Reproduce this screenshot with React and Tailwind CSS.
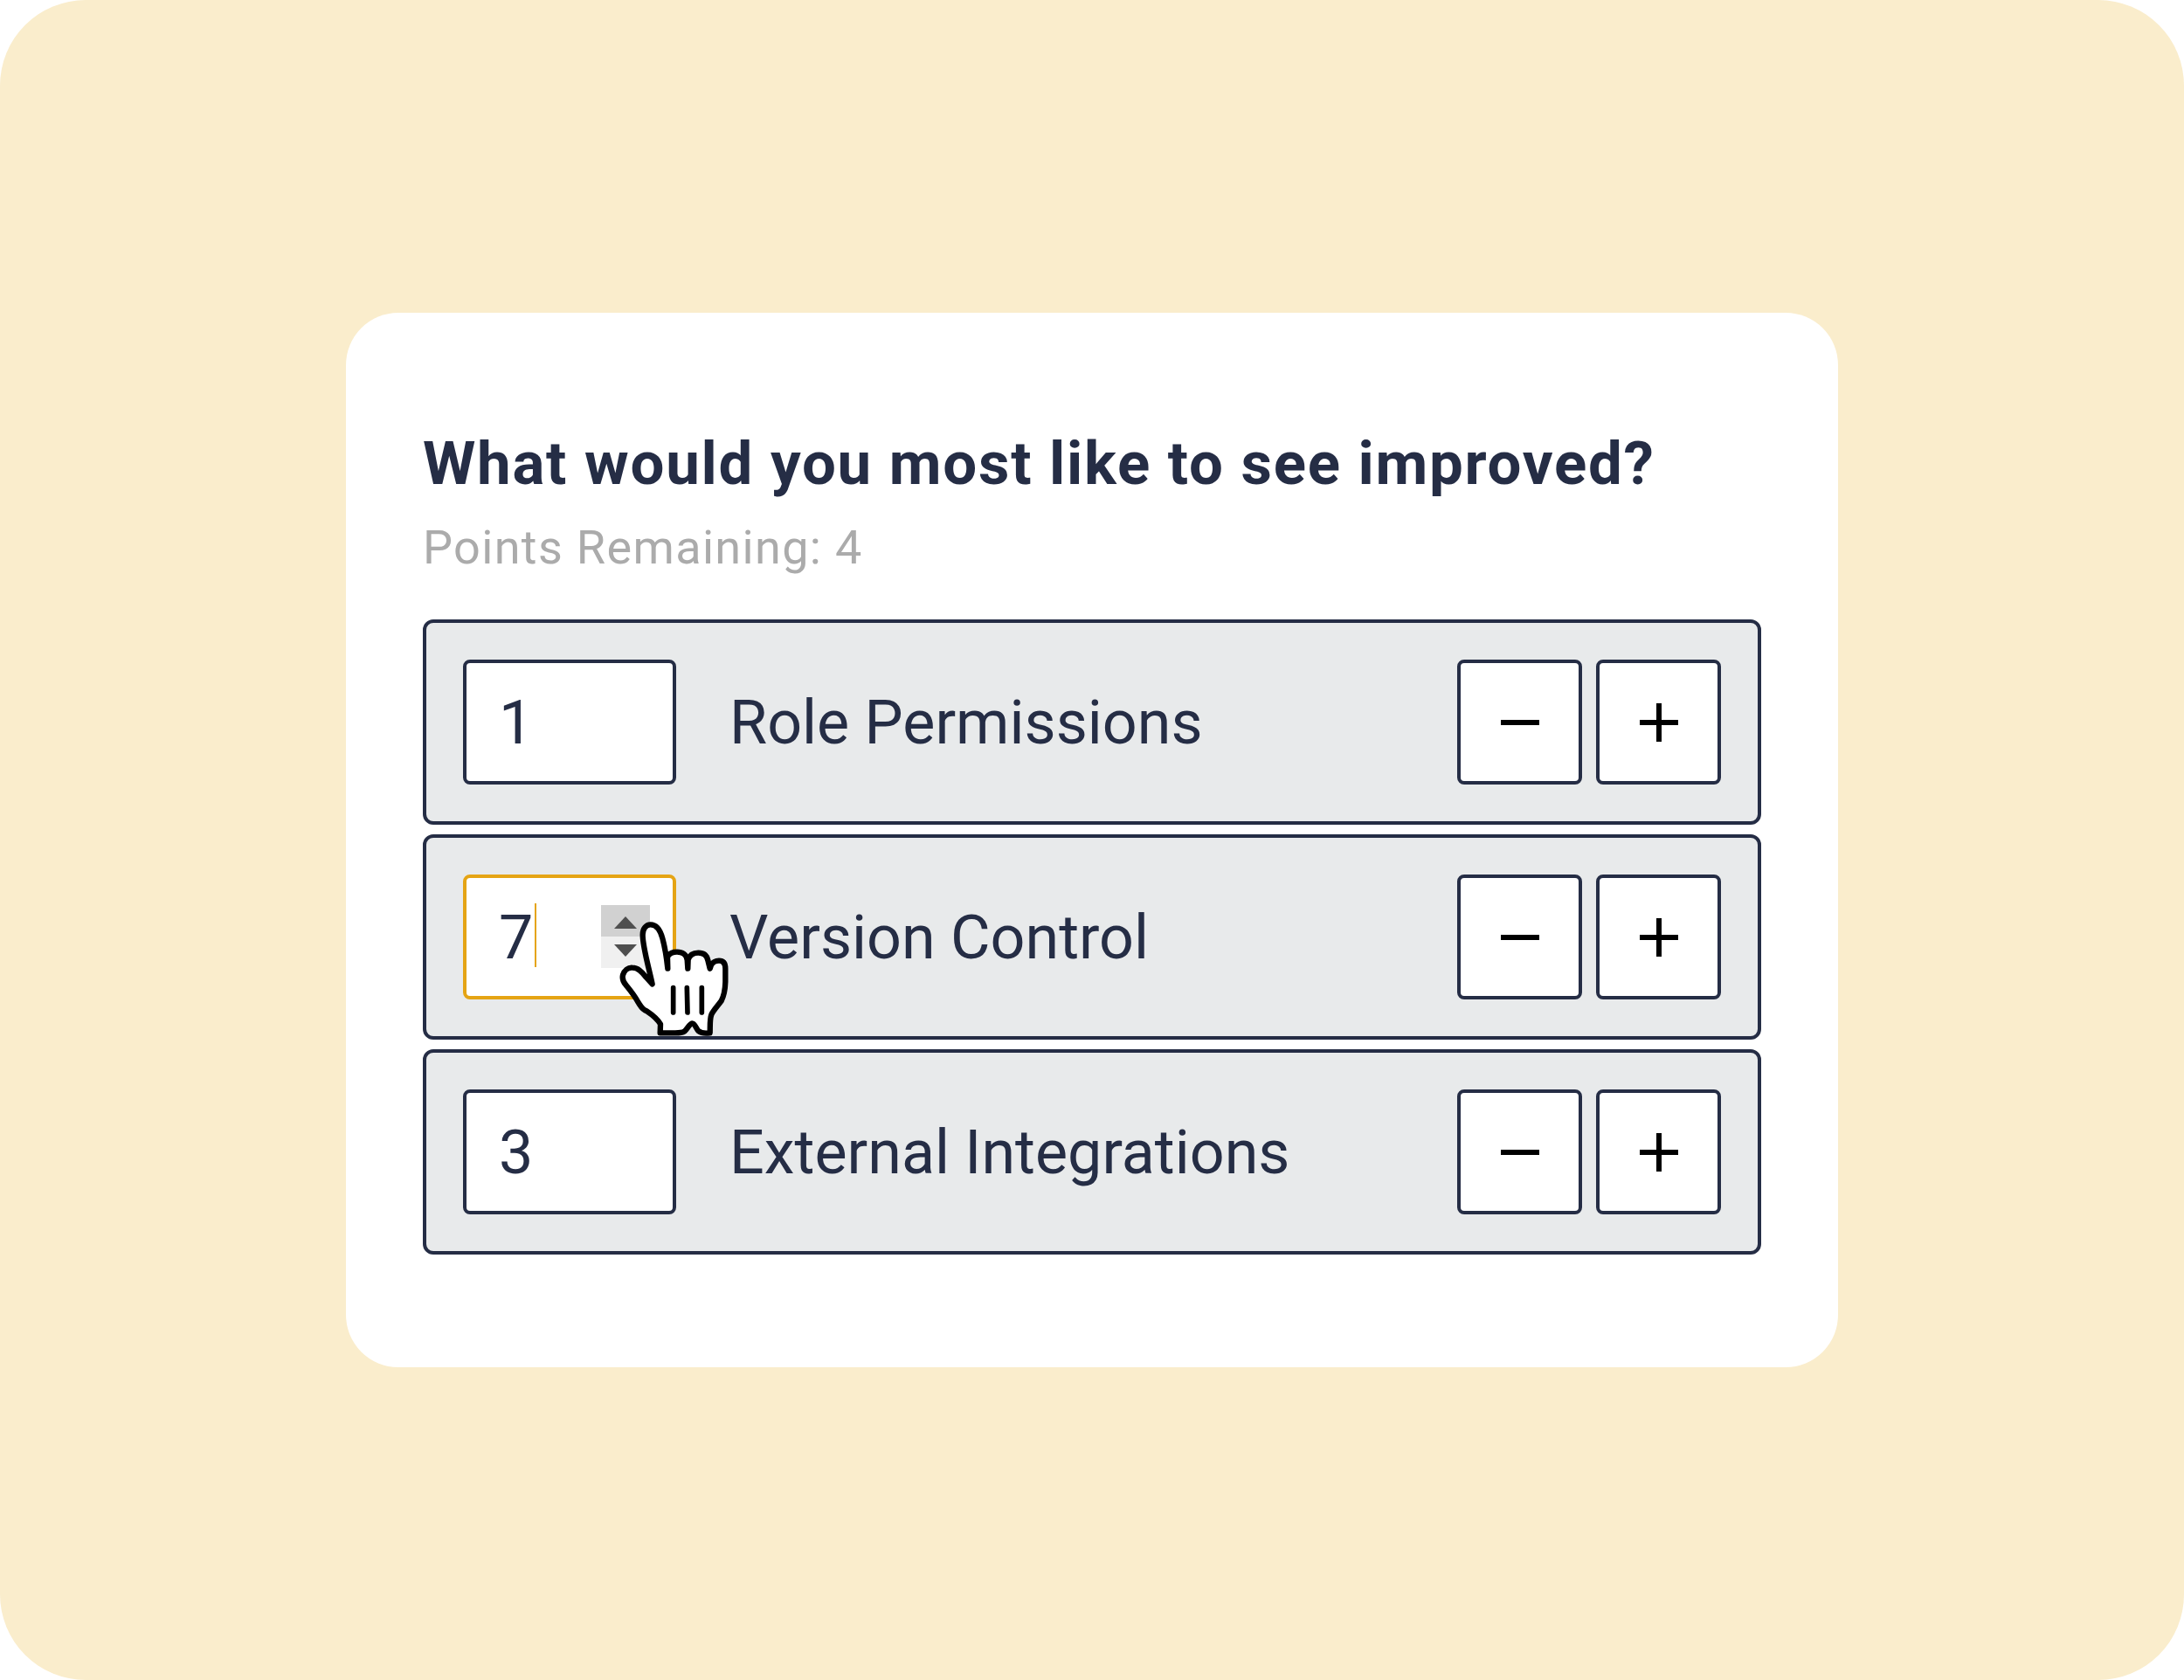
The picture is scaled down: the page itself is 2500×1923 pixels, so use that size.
import { useState } from 'react';
import clsx from 'clsx';

const TOTAL_POINTS = 15;

const OPTIONS = [
  { id: 'role-permissions', label: 'Role Permissions', points: 1 },
  { id: 'version-control', label: 'Version Control', points: 7 },
  { id: 'external-integrations', label: 'External Integrations', points: 3 },
];

function MinusIcon() {
  return (
    <svg viewBox="0 0 44 44" className="h-11 w-11" aria-hidden="true">
      <path d="M0 22H44" stroke="currentColor" strokeWidth="6" />
    </svg>
  );
}

function PlusIcon() {
  return (
    <svg viewBox="0 0 44 44" className="h-11 w-11" aria-hidden="true">
      <path d="M0 22H44M22 0V44" stroke="currentColor" strokeWidth="6" />
    </svg>
  );
}

function HandCursor({ className }) {
  return (
    <svg viewBox="80 64 390 408" className={className} aria-hidden="true">
      <g stroke="#000" strokeWidth="19" strokeLinecap="round" strokeLinejoin="round">
        <path
          fill="#fff"
          d="M199 287C187 230 166 160 166 118C166 96 178 83 193 83C212 83 226 100 234 130C242 160 248 195 252 234L251 194C257 182 270 177 284 177C302 177 316 186 319 204L321 234L322 204C327 188 340 180 357 180C376 180 387 190 390 206L397 234L401 222C407 212 418 207 428 207C444 207 450 218 450 234L450 280C449 310 446 326 436 345C424 362 410 376 402 392C396 408 398 430 397 455C382 457 368 457 358 449C350 441 345 422 336 422C327 423 320 440 310 449C300 456 290 455 270 455L226 455L227 425C216 405 195 390 180 380C165 376 160 364 150 349C135 322 120 305 108 290C98 278 95 268 98 256C103 240 116 230 130 231C150 231 162 244 178 264Z"
        />
        <path strokeWidth="17" fill="none" d="M271 300V385M318 300L320 385M369 300V385" />
      </g>
    </svg>
  );
}

function StepButton({ label, onClick, children }) {
  return (
    <button
      type="button"
      aria-label={label}
      onClick={onClick}
      className="flex h-[143px] w-[143px] shrink-0 items-center justify-center rounded-lg border-4 border-[#252d45] bg-white text-black"
    >
      {children}
    </button>
  );
}

function Spinner({ label, onStep }) {
  return (
    <div className="absolute right-[30px] top-[35px] flex h-[72px] w-14 flex-col">
      <button
        type="button"
        aria-label={`Increase ${label}`}
        onClick={() => onStep(1)}
        className="flex flex-1 items-center justify-center bg-[#d1d1d1]"
      >
        <svg viewBox="0 0 26 14" className="mt-1 h-3.5 w-[26px]" aria-hidden="true">
          <path d="M0 14L13 0L26 14Z" fill="#4f4f4f" />
        </svg>
      </button>
      <button
        type="button"
        aria-label={`Decrease ${label}`}
        onClick={() => onStep(-1)}
        className="flex flex-1 items-center justify-center bg-[#f0f0f0]"
      >
        <svg viewBox="0 0 26 14" className="mb-1 h-3.5 w-[26px]" aria-hidden="true">
          <path d="M0 0H26L13 14Z" fill="#4f4f4f" />
        </svg>
      </button>
    </div>
  );
}

function OptionRow({ option, active, onChange }) {
  const { id, label, points } = option;
  const step = (delta) => onChange(id, points + delta);

  return (
    <li className="flex items-center rounded-xl border-4 border-[#252d45] bg-[#e8eaeb] p-[42px]">
      <div className="relative shrink-0">
        <input
          id={id}
          type="number"
          value={points}
          onChange={(e) => onChange(id, Number(e.target.value))}
          className={clsx(
            'block h-[143px] w-[244px] appearance-none rounded-lg border-4 bg-white px-[37px] text-[70px] outline-none [appearance:textfield]',
            active ? 'border-[#e5a414]' : 'border-[#252d45]',
          )}
        />
        {active && (
          <>
            <span className="absolute left-[82px] top-[33px] h-[73px] w-0.5 bg-[#e5a414]" />
            <Spinner label={label} onStep={step} />
            <HandCursor className="pointer-events-none absolute left-[177px] top-[51px] z-10 h-[136px] w-[130px]" />
          </>
        )}
      </div>
      <label htmlFor={id} className="ml-[61px] flex-1 text-[70px] leading-[80px]">
        {label}
      </label>
      <div className="flex gap-4">
        <StepButton label={`Remove a point from ${label}`} onClick={() => step(-1)}>
          <MinusIcon />
        </StepButton>
        <StepButton label={`Add a point to ${label}`} onClick={() => step(1)}>
          <PlusIcon />
        </StepButton>
      </div>
    </li>
  );
}

function App() {
  const [options, setOptions] = useState(OPTIONS);
  const remaining = TOTAL_POINTS - options.reduce((sum, o) => sum + o.points, 0);

  const handleChange = (id, points) => {
    setOptions((prev) => prev.map((o) => (o.id === id ? { ...o, points: Math.max(0, points) } : o)));
  };

  return (
    <div className="bg-white font-['Roboto',sans-serif] text-[#252d45]">
      <main className="flex min-h-screen items-center justify-center rounded-[98px] bg-[#faedcc]">
        <section className="w-full max-w-[1708px] rounded-[60px] bg-white px-[88px] pb-[129px] pt-[133px]">
          <h1 className="text-[69px] font-bold leading-[80px] tracking-wide">
            What would you most like to see improved?
          </h1>
          <p className="mt-6 text-[54px] leading-[64px] tracking-wide text-[#ababab]">
            Points Remaining: {remaining}
          </p>
          <ul className="mt-[50px] flex flex-col gap-[11px]">
            {options.map((option) => (
              <OptionRow
                key={option.id}
                option={option}
                active={option.id === 'version-control'}
                onChange={handleChange}
              />
            ))}
          </ul>
        </section>
      </main>
    </div>
  );
}

export default App;
